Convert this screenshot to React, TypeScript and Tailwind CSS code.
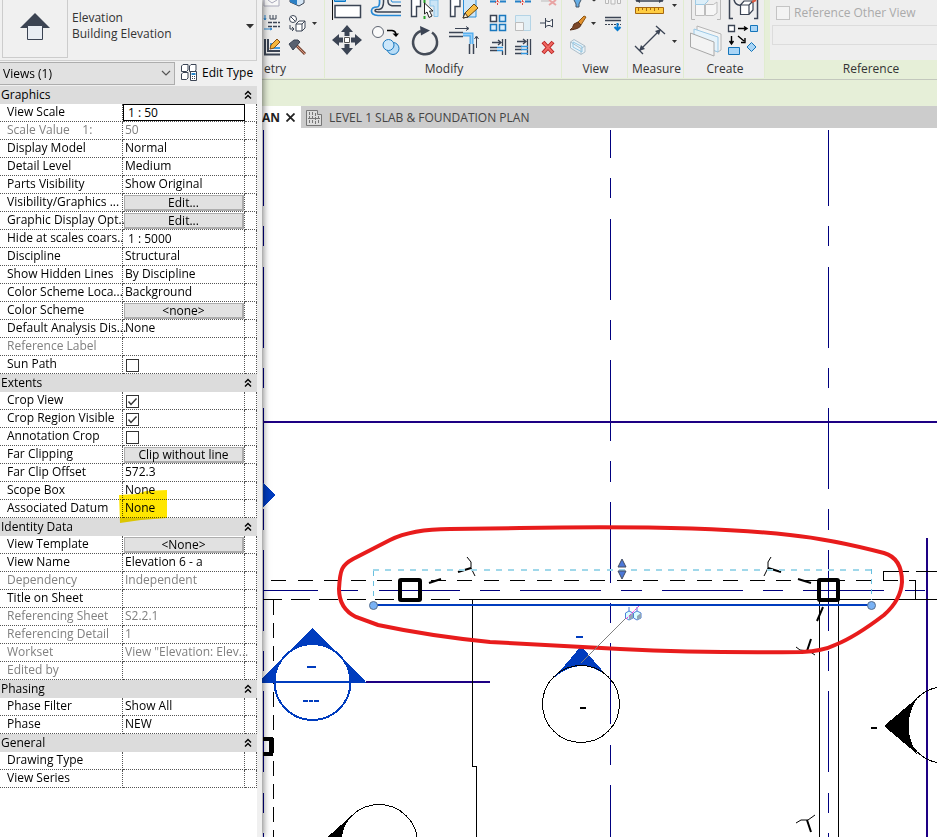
import type { ReactNode } from "react";

type Row = {
  label: string;
  value?: string;
  kind?: "text" | "input" | "button" | "check";
  checked?: boolean;
  muted?: boolean;
  marked?: boolean;
  focused?: boolean;
};

const sections: { title: string; rows: Row[] }[] = [
  {
    title: "Graphics",
    rows: [
      { label: "View Scale", value: "1 : 50", kind: "input", focused: true },
      { label: "Scale Value    1:", value: "50", muted: true },
      { label: "Display Model", value: "Normal" },
      { label: "Detail Level", value: "Medium" },
      { label: "Parts Visibility", value: "Show Original" },
      { label: "Visibility/Graphics ...", value: "Edit...", kind: "button" },
      { label: "Graphic Display Opt...", value: "Edit...", kind: "button" },
      { label: "Hide at scales coars...", value: "1 : 5000", kind: "input" },
      { label: "Discipline", value: "Structural" },
      { label: "Show Hidden Lines", value: "By Discipline" },
      { label: "Color Scheme Loca...", value: "Background" },
      { label: "Color Scheme", value: "<none>", kind: "button" },
      { label: "Default Analysis Dis...", value: "None" },
      { label: "Reference Label", muted: true },
      { label: "Sun Path", kind: "check" },
    ],
  },
  {
    title: "Extents",
    rows: [
      { label: "Crop View", kind: "check", checked: true },
      { label: "Crop Region Visible", kind: "check", checked: true },
      { label: "Annotation Crop", kind: "check" },
      { label: "Far Clipping", value: "Clip without line", kind: "button" },
      { label: "Far Clip Offset", value: "572.3" },
      { label: "Scope Box", value: "None" },
      { label: "Associated Datum", value: "None", marked: true },
    ],
  },
  {
    title: "Identity Data",
    rows: [
      { label: "View Template", value: "<None>", kind: "button" },
      { label: "View Name", value: "Elevation 6 - a" },
      { label: "Dependency", value: "Independent", muted: true },
      { label: "Title on Sheet" },
      { label: "Referencing Sheet", value: "S2.2.1", muted: true },
      { label: "Referencing Detail", value: "1", muted: true },
      { label: "Workset", value: 'View "Elevation: Elev...', muted: true },
      { label: "Edited by", muted: true },
    ],
  },
  {
    title: "Phasing",
    rows: [
      { label: "Phase Filter", value: "Show All" },
      { label: "Phase", value: "NEW" },
    ],
  },
  { title: "General", rows: [{ label: "Drawing Type" }, { label: "View Series" }] },
];

function Value({ row, id }: { row: Row; id: string }) {
  if (row.kind === "button")
    return (
      <button
        id={id}
        className="mx-px mt-px block h-4 w-[120px] border border-r-2 border-b-2 border-[#adadad] bg-[#e1e1e1] text-center leading-[14px]"
      >
        {row.value}
      </button>
    );
  if (row.kind === "check")
    return (
      <span className="relative block h-[17px] pt-[3px] pl-[3px]">
        <input
          id={id}
          type="checkbox"
          defaultChecked={row.checked}
          className="peer block size-[13px] appearance-none border border-[#333] bg-white"
        />
        <svg className="pointer-events-none absolute top-[3px] left-[3px] hidden size-[13px] peer-checked:block" viewBox="0 0 13 13">
          <path d="M2.5 6.5 5 9.5 10.5 3.5" fill="none" stroke="#333" strokeWidth="1.4" />
        </svg>
      </span>
    );
  if (row.kind === "input")
    return (
      <input
        id={id}
        defaultValue={row.value}
        className={
          row.focused
            ? "block h-[17px] w-[122px] border border-black bg-white pb-px pl-1 outline-none"
            : "block h-[17px] w-full bg-white pb-px pl-[5px] outline-none"
        }
      />
    );
  return <span className="block pl-0.5">{row.value}</span>;
}

function Properties() {
  return (
    <table className="w-[257px] table-fixed border-separate border-spacing-0 text-left whitespace-pre">
      <colgroup>
        <col className="w-[123px]" />
        <col className="w-[122px]" />
        <col className="w-3" />
      </colgroup>
      {sections.map((s) => (
        <tbody key={s.title}>
          <tr className="h-[18px] bg-[#dcdcdc]">
            <th colSpan={2} className="p-0 pl-px leading-[18px] font-normal">
              {s.title}
            </th>
            <th className="p-0">
              <button aria-label={`Collapse ${s.title}`} className="-ml-px block">
                <svg width="8" height="10" viewBox="0 0 8 10" className="block">
                  <path d="M1 4.5 4 1.5 7 4.5M1 8.5 4 5.5 7 8.5" fill="none" stroke="#000" strokeWidth="1.4" />
                </svg>
              </button>
            </th>
          </tr>
          {s.rows.map((r) => {
            const id = r.label.replace(/\W+/g, "-").toLowerCase();
            return (
              <tr key={r.label} className={r.muted ? "h-[18px] align-top text-[#808080]" : "h-[18px] align-top"}>
                <th className="border-r border-b border-dotted border-[#555] p-0 pl-[7px] leading-[15px] font-normal">
                  {r.kind ? <label htmlFor={id}>{r.label}</label> : r.label}
                </th>
                <td className="relative border-r border-b border-dotted border-[#555] p-0 leading-[15px]">
                  <Value row={r} id={id} />
                  {r.marked && (
                    <svg className="pointer-events-none absolute -top-2.5 -left-1 mix-blend-multiply" width="49" height="34" viewBox="0 0 49 34">
                      <path d="M0 5 18 4 27 1 48 0V28L22 30 1 33Z" fill="#ffe600" />
                    </svg>
                  )}
                </td>
                <td className="border-r border-b border-dotted border-[#555] p-0" />
              </tr>
            );
          })}
        </tbody>
      ))}
    </table>
  );
}

/** A ribbon command; its drawing uses the ribbon's own coordinate space. */
function Tool({ name, box, children }: { name: string; box: [number, number, number, number]; children?: ReactNode }) {
  return (
    <button aria-label={name} className="block shrink-0">
      <svg width={box[2]} height={box[3]} viewBox={box.join(" ")} fill="none" stroke="#3b4454" className="block">
        {children}
      </svg>
    </button>
  );
}

function Panel({ title, className, children }: { title: string; className?: string; children: ReactNode }) {
  return (
    <section className={`flex h-[78px] shrink-0 flex-col border-r border-[#e0ecd0] bg-[#eeeeee] ${className ?? ""}`}>
      <div className="flex h-[60px] items-start">{children}</div>
      <h2 className="pl-0.5 text-center leading-[18px] text-[#333]">{title}</h2>
    </section>
  );
}

const caret = "h5l-2.5 3Z";

function Ribbon() {
  return (
    <div className="flex h-20 overflow-hidden border-b border-[#c3c8bd] bg-[#e6efd8]">
      <Panel title="etry" className="w-[63px] [&>h2]:pr-11">
        <div className="grid grid-cols-[20px_42px]">
          <Tool name="Cope" box={[262, 0, 20, 12]}>
            <path d="M264 0V6H279V0M268 0 272 3 277 0" fill="#f8f8f8" stroke="#aab" />
          </Tool>
          <Tool name="Join" box={[282, 0, 42, 12]}>
            <path d="M290 0V2L299 6 304 3V0" fill="#d5e6f5" />
            <path d="M290 0V2L297 5V0Z" fill="#2b7fc4" stroke="none" />
          </Tool>
          <Tool name="Wall joins" box={[262, 12, 20, 23]}>
            <path d="M265 15v5m-1-2 1 2 1-2M264 29h8m-2-1 2 1-2 1" stroke="#2d88d0" />
            <path d="M270 15v4h3v-4M273 19h3v-4" />
            <path d="M268 22.5h12M268 26.5h12" strokeWidth="1.5" strokeDasharray="4 1" />
          </Tool>
          <Tool name="Split face" box={[282, 12, 42, 23]}>
            <circle cx="293" cy="19" r="3.5" fill="#fff" />
            <path d="M291 17 295 21M290 25v4h4m-2-2 2 2-2 2" />
            <path d="M296 24 299 21H305V28L302 31H296ZM296 24H302V31M302 24 305 21" fill="#fff" />
            <path d={`M312 22${caret}`} fill="#333" stroke="none" />
          </Tool>
          <Tool name="Edit joins" box={[262, 35, 20, 24]}>
            <path d="M265 39V55M268 39V51H280M264 54.5H280" strokeWidth="2" />
            <path d="M271 43V48H280" stroke="#3f9be0" strokeWidth="2" />
            <path d="M270 49 271 45 277 39 280 42 274 48Z" fill="#f6b63c" stroke="#87521a" />
          </Tool>
          <Tool name="Demolish" box={[282, 35, 42, 24]}>
            <path d="M296 45 305 54" stroke="#7a4b39" strokeWidth="3" />
            <path d="M296 45 305 54" stroke="#df957d" strokeWidth="1" />
            <path d="M289 44 294 40H298L300 42 293 50Z" fill="#596170" />
          </Tool>
        </div>
      </Panel>

      <Panel title="Modify" className="w-[237px]">
        <div className="grid grid-cols-4 pl-[3px]">
          <Tool name="Align" box={[328, 0, 39, 22]}>
            <path d="M332.5 0V20" stroke="#111" />
            <path d="M334.5 0H345.5V1.5H334.5Z" stroke="#0878c8" fill="#c4e4f8" />
            <path d="M335 5.5H360.5V17.5H335Z" fill="#fff" strokeWidth="1.5" />
          </Tool>
          <Tool name="Offset" box={[367, 0, 39, 22]}>
            <path d="M401 15.5H378Q371 15 371.5 10.5 372 7 377 7 380 7 379.5 0" stroke="#2689d6" strokeWidth="1.7" />
            <path d="M401 12H378Q375 12 375 10.5T379 9.5Q384 9 383.5 0M401 5.7H392Q387.5 5 388 0" strokeWidth="1.5" />
            <path d="M401 2H392L391 0" stroke="#2689d6" />
          </Tool>
          <Tool name="Mirror pick" box={[406, 0, 39, 22]}>
            <path d="M411.5 0V16.5H416.5V6.5H420.5V0" fill="#fff" strokeWidth="1.4" />
            <path d="M430 0V6H434V16.5H438V0Z" fill="#cce5f6" stroke="#8cc5e9" />
            <path d="M424.5 0V3M424.5 16V19" stroke="#29a329" strokeWidth="2" />
            <path d="M424.5 3V14L427 12 429 17.5 432 16 429.5 11H433Z" fill="#fff" stroke="#222" />
          </Tool>
          <Tool name="Mirror draw" box={[445, 0, 39, 22]}>
            <path d="M450.5 0V16.5H455V6.5H460V0" fill="#fff" strokeWidth="1.4" />
            <path d="M463.5 0V17H476V0" fill="#cfe7f8" stroke="#2b8fd9" />
            <path d="M463 18 465 13 474 4 478 8 468 17Z" fill="#f7bd44" stroke="#694512" />
            <path d="M463 18 465 13 468 17Z" fill="#ffe9c4" stroke="#333" />
          </Tool>
          <Tool name="Move" box={[328, 22, 39, 36]}>
            <path d="M347 25 353 32H349.5V36H344.5V32H341ZM347 55 353 48H349.5V44H344.5V48H341ZM332 40 339 34V37.5H343V42.5H339V46ZM362 40 355 34V37.5H351V42.5H355V46Z" fill="#3b4454" stroke="none" />
            <path d="M344.5 37.5H349.5V42.5H344.5Z" fill="#fff" stroke="#555" />
          </Tool>
          <Tool name="Copy" box={[367, 22, 39, 36]}>
            <circle cx="378" cy="32" r="5.5" fill="#fafafa" stroke="#5d6470" />
            <path d="M387 30.5H392Q396 31 396 35" stroke="#000" strokeWidth="1.5" />
            <path d="M392.500 33.500H399L396 37Z" fill="#000" stroke="none" />
            <circle cx="393" cy="48.500" r="6" fill="#b7dcf6" stroke="#1978be" />
            <circle cx="388.500" cy="45" r="5.500" fill="#cce7fa" stroke="#1978be" />
          </Tool>
          <Tool name="Rotate" box={[406, 22, 39, 36]}>
            <path d="M432 32.500A12 12 0 1 1 421 31" strokeWidth="2.500" stroke="#444b57" />
            <path d="M420 26 430 30.500 421 35.500Z" fill="#3b4454" stroke="none" />
          </Tool>
          <Tool name="Trim to corner" box={[445, 22, 39, 36]}>
            <path d="M455 28.500H468M466 26.500 469 28.500 466 30.500M476.500 48V37M474.500 39 476.500 36 478.500 39" />
            <path d="M449 32.500H463M449 36.500H463M469.500 44V54M473.500 44V54" strokeWidth="1.500" />
            <path d="M463 34.500H471.500V44" stroke="#4aa9ed" strokeWidth="4" />
            <path d="M463 34.500H471.500V44" stroke="#9cd0f6" strokeWidth="1.500" />
          </Tool>
        </div>
        <div className="grid grid-cols-3 pl-0.5">
          <Tool name="Split" box={[486, 0, 25, 12]}>
            <path d="M490 1.500H496M500 1.500H506" stroke="#2581c7" strokeWidth="2" />
            <path d="M497.500 0V5M495 3 497.500 1 500 3" stroke="#e3473d" strokeDasharray="2 1" />
          </Tool>
          <Tool name="Split with gap" box={[511, 0, 25, 12]}>
            <path d="M515 1.500H521M525 1.500H531" stroke="#2581c7" strokeWidth="2" />
            <path d="M522.500 0V5M520 3 522.500 1 525 3" stroke="#e3473d" strokeDasharray="2 1" />
          </Tool>
          <Tool name="Unpin" box={[536, 0, 25, 12]}>
            <path d="M541 1H549" stroke="#bbb" />
            <path d="M549 0 556 5M556 0 549 5" stroke="#e8a4a4" strokeWidth="2" />
          </Tool>
          <Tool name="Array" box={[486, 12, 25, 23]}>
            <path d="M490.500 15.500H496.500V21.500H490.500Z" fill="#fff" strokeWidth="1.500" />
            <path d="M499.500 15.500H505.500V21.500H499.500ZM490.500 24.500H496.500V30.500H490.500ZM499.500 24.500H505.500V30.500H499.500Z" fill="#d8ecfa" stroke="#1978be" strokeWidth="1.500" />
          </Tool>
          <Tool name="Scale" box={[511, 12, 25, 23]}>
            <path d="M515.500 15.500H530.500V30.500H515.500Z" fill="#e0eef5" stroke="#b4d4e6" />
            <path d="M515.500 22.500H523.500V30.500H515.500Z" fill="#f5f5f5" stroke="#bcbcbc" />
          </Tool>
          <Tool name="Pin" box={[536, 12, 25, 23]}>
            <path d="M540 23H545M545.500 18V28M545.500 20.500 548 21.500H550L552.500 19V27L550 25.500H548L545.500 26.500" fill="#f7f7f7" />
          </Tool>
          <Tool name="Trim single" box={[486, 35, 25, 23]}>
            <path d="M492 42.500H500M498 40 501 42.500 498 45M490 47.500H497M490 50.500H497M502.500 39V46M502.500 51V55M505.500 39V55" strokeWidth="1.300" />
            <path d="M497 47.500H503M497 50.500H503" stroke="#3197e2" strokeWidth="1.500" />
          </Tool>
          <Tool name="Trim multiple" box={[511, 35, 25, 23]}>
            <path d="M517 41.500H525M523 39 526 41.500 523 44M515 46.500H522M515 49.500H522M515 53.500H522M527.500 39V55M530.500 39V55" strokeWidth="1.300" />
            <path d="M521 46.500H528M521 49.500H528M521 53.500H528" stroke="#3197e2" strokeWidth="1.500" />
          </Tool>
          <Tool name="Delete" box={[536, 35, 25, 23]}>
            <path d="M543 42 553 53M553 42 543 53" stroke="#b82020" strokeWidth="4" />
            <path d="M543.500 42.500 552.500 52.500M552.500 42.500 543.500 52.500" stroke="#f16a64" strokeWidth="2" />
          </Tool>
        </div>
      </Panel>

      <Panel title="View" className="w-[66px]">
        <div className="grid grid-cols-[38px_26px]">
          <Tool name="Hide" box={[562, 0, 38, 12]}>
            <path d="M574 0 576 4V7H579V4L581 0" fill="#66aee6" stroke="#456" />
            <path d="M592 0H596L594 1.500Z" fill="#333" stroke="none" />
          </Tool>
          <Tool name="Displace" box={[600, 0, 26, 12]}>
            <path d="M605.500 0V3.500H608.500V0M611 0V4H615V0M617.500 0V3.500H620.500V0" stroke="#b8b8b8" fill="#f4f4f4" />
          </Tool>
          <Tool name="Override" box={[562, 12, 38, 23]}>
            <path d="M578 22 584 16 586 17 581 25Z" fill="#e2902c" stroke="#8b5715" />
            <path d="M570 30Q573 28 574 24L578 22 581 25Q580 29 570 30Z" fill="#7c4727" stroke="#56301a" />
            <path d={`M591 22${caret}`} fill="#333" stroke="none" />
          </Tool>
          <Tool name="Linework" box={[600, 12, 26, 23]}>
            <path d="M605 17.500H621M605 20.500H621" strokeWidth="1.600" />
            <path d="M605 24.500H621" strokeDasharray="2 1" />
            <path d="M617.500 23V30M614.500 27 617.500 30 620.500 27" stroke="#087bd0" strokeWidth="2" />
          </Tool>
          <Tool name="Selection box" box={[562, 35, 38, 23]}>
            <path d="M570.500 42 574 39.500 585 46V52L581 54.500 570.500 48ZM570.500 42 581 48.500V54M581 48.500 585 46" stroke="#aebfca" fill="#e9f3f9" />
            <path d="M573 42V47L582 52V46.500Z" stroke="#92c8e6" />
          </Tool>
        </div>
      </Panel>

      <Panel title="Measure" className="w-14">
        <div className="grid">
          <Tool name="Measure distance" box={[628, 0, 55, 20]}>
            <path d="M636 1H663" strokeWidth="1.500" />
            <path d="M635 0H640V3ZM664 0H659V3Z" fill="#3b4454" stroke="none" />
            <path d="M635.500 7.500H663.500V13.500H635.500Z" fill="#ffcd42" stroke="#a66810" />
            <path d="M638.500 8V11M642.500 8V10M646.500 8V11M650.500 8V10M654.500 8V11M658.500 8V10" stroke="#a66810" />
            <path d={`M672 4${caret}`} fill="#333" stroke="none" />
          </Tool>
          <Tool name="Aligned dimension" box={[628, 20, 55, 38]}>
            <path d="M635 46 643 54M656 26 665 34M640 50 660 30" strokeWidth="1.300" />
            <path d="M639 51 641 45 645 49ZM661 29 655 31 659 35Z" fill="#3b4454" stroke="none" />
            <path d={`M672 40${caret}`} fill="#333" stroke="none" />
          </Tool>
        </div>
      </Panel>

      <Panel title="Create" className="w-[81px]">
        <div className="grid grid-cols-2">
          <Tool name="Create parts" box={[684, 0, 40, 22]}>
            <path d="M695 19.500H691.500V0M717 19.500H720.500V0" stroke="#b8b8b8" />
            <path d="M695.500 4.500H704.500V15.500H695.500ZM705.500 4.500H713.500L717 2V13L713.500 15.500H705.500Z" fill="#f6f6f6" stroke="#bdbdbd" />
            <path d="M695.500 0V4.500H704.500L708 1V0" fill="#dceef8" stroke="#9ecbe5" />
          </Tool>
          <Tool name="Create assembly" box={[724, 0, 40, 22]}>
            <path d="M733 18.500H729.500V0M754 18.500H757.500V0" strokeWidth="1.500" />
            <path d="M734 0Q736 6 741 5" fill="#fff" strokeWidth="1.500" />
            <path d="M740.500 5 744 1H753V10L749 14.500H740.500ZM740.500 5H749V14M749 5 753 1" fill="#fff" strokeWidth="1.200" />
            <path d="M752 2 756 0" stroke="#dc593f" strokeWidth="2" />
          </Tool>
          <Tool name="Create group" box={[684, 22, 40, 36]}>
            <path d="M697 26 721 34V50L718 52 697 43Z" fill="#f4f4f4" stroke="#b6b6b6" />
            <path d="M694 29 718 37V52L694 43Z" fill="#e6f3fb" stroke="#9cc9e6" />
            <path d="M690.500 33 714 42V56L690.500 47Z" fill="#f3f3f3" stroke="#a8a8a8" />
          </Tool>
          <Tool name="Create similar" box={[724, 22, 40, 36]}>
            <path d="M728.500 25.500H734.500V31.500H728.500Z" fill="#fff" strokeWidth="1.300" />
            <path d="M750.500 25.500H757.500V31.500H750.500ZM728.500 47.500H739.500V54.500H728.500ZM751.500 42.500 756 47 751.500 51.500 747 47Z" fill="#a9d5f6" stroke="#1475ba" />
            <path d="M738 28.500H746M744 26.500 747 28.500 744 30.500M731.500 36V43M729.500 41 731.500 44 733.500 41M738 36 744 41M745 38V42.500H741" stroke="#000" strokeWidth="1.400" />
          </Tool>
        </div>
      </Panel>

      <section className="ml-[5px] flex h-[78px] min-w-[167px] flex-1 flex-col overflow-hidden">
        <div className="h-[60px] bg-[#eeeeee] pl-0.5">
          <label className="flex h-[25px] items-center gap-1 pl-1 whitespace-nowrap text-[#aaa]">
            <input type="checkbox" disabled className="size-[14px] appearance-none border border-[#c4c4c4] bg-[#f3f3f3]" />
            Reference Other View
          </label>
          <select disabled aria-label="Referenced view" className="block h-5 w-[220px] appearance-none border border-[#dcdcdc] bg-[#eeeeee]">
            <option value="" />
          </select>
        </div>
        <h2 className="w-[202px] text-center leading-[18px] text-[#333]">Reference</h2>
      </section>
    </div>
  );
}

const GRID = "81 20.200 20.200 20.200";

function Drawing() {
  return (
    <svg role="img" aria-label="Plan view" className="block h-[709px] w-full bg-white" fill="none" shapeRendering="crispEdges">
      <g transform="translate(-262 -128)">
        <g stroke="#00007f">
          <path d="M263.500 130V837M828.500 130V837" strokeDasharray={GRID} strokeDashoffset="5" />
          <path d="M610.500 130V837" strokeDasharray={GRID} strokeDashoffset="53" />
          <path d="M263 590.500H927" strokeDasharray={GRID} strokeDashoffset="26" />
        </g>
        <path d="M263 422H937M366 682H490M927 538V837" stroke="#1d0083" strokeWidth="2" />
        <path d="M263 483 275 495 263 507Z" fill="#003cbe" />

        <g stroke="#000">
          <path d="M271 580.500H915" strokeDasharray="15 11.600" />
          <path d="M263 599.500H472" strokeDasharray="19 9" />
          <path d="M472 599.500H937M472.500 600V766.500H476.500V837M819.500 600V837M838.500 600V837M915.500 580V599" />
          <path d="M273.500 600V837" strokeDasharray="15 8" />
          <path d="M883.500 580V571.500H937" strokeDasharray="34 7" />
          <path d="M263 738.500H271V753.500H263" strokeWidth="4" />
          <g strokeWidth="4" shapeRendering="auto">
            <rect x="400" y="580" width="20" height="20" rx="1" />
            <rect x="819" y="580" width="19" height="20" rx="1" />
          </g>
          <g shapeRendering="auto">
            <path d="M467 557 471 562V568L475 576M771 557 768 562V568L764 576M796 647 800 650 809 651 815 655M796 823 801 820H808L815 815" />
            <path d="M429 583 441 579M458 572 471 568M768 568 781 572M798 579 811 583M823 607 817 621M811 639 807 651M807 820 811 832" strokeWidth="2" />
          </g>
        </g>

        <g>
          <path d="M312.500 628 366.500 682.500H258.500Z" fill="#003cbe" />
          <circle cx="312.500" cy="682" r="38" fill="#fff" stroke="#003cbe" strokeWidth="2" />
          <path d="M275 682H351" stroke="#003cbe" strokeWidth="2" />
          <path d="M307 667H316M303 701H308M309 701H313M314 701H319" stroke="#003cbe" strokeWidth="2" />
        </g>

        <path d="M373.500 596V569M871.500 569V600" stroke="#69c0e0" strokeDasharray="5 5" />
        <path d="M373 569.500H872" stroke="#a0d8ea" strokeWidth="2" strokeDasharray="6 6.300" />
        <path d="M373 605H871" stroke="#003cbe" strokeWidth="2" />
        <g shapeRendering="auto" fill="#79b2f5" stroke="#586f8e">
          <circle cx="373.500" cy="605.500" r="4" />
          <circle cx="871.500" cy="605.500" r="4" />
        </g>
        <path d="M622 559 626 567H618ZM622 579 626 571H618Z" fill="#4c78d8" stroke="#444d60" shapeRendering="auto" />

        <path d="M581 646 555 677Q582 655 608 677Z" fill="#003cbe" />
        <circle cx="581" cy="704" r="38.500" stroke="#000" />
        <path d="M576 637H583" stroke="#003cbe" strokeWidth="2" />
        <path d="M580 708H586M871 727.500H877" stroke="#000" strokeWidth="2" />

        <path d="M917 698 884 726 917 754Q900 726 917 698Z" fill="#000" />
        <circle cx="944" cy="725" r="38" stroke="#000" />
        <path d="M351 816 322 842H342Q341 828 351 816Z" fill="#000" />
        <circle cx="379" cy="843" r="38.500" stroke="#000" />

        <g shapeRendering="auto">
          <path d="M339 589C340 569 342 565 353 559L390 540Q412 529 450 529L520 528C640 526 730 528 790 535Q830 539 884 553C898 557 902 570 902 582Q901 600 884 615C867 628 850 639 835 645Q823 651 802 652C730 653 680 652 620 649L490 642Q430 636 378 625L356 617C344 611 339 602 339 589Z" stroke="#e81c1c" strokeWidth="4" />
          <path d="M581 663 628 616" stroke="#808080" />
          <path d="M625.500 613 629 611 633 613V618L629 620 625.500 618ZM633.500 613 637 611 641 613V618L637 620 633.500 618ZM629 611V607M637 611V607" fill="#d8ffff" stroke="#4d7ed8" />
          <path d="M629 616V620L633 618V613ZM637 616V620L641 618V613Z" fill="#91a7b6" />
          <path d="M626 619 639 606" stroke="#f034d6" strokeDasharray="3 1" />
        </g>
      </g>
    </svg>
  );
}

export default function App() {
  return (
    <div className="flex w-full overflow-hidden bg-white font-['Open_Sans','Noto_Sans',sans-serif] text-[12px] text-black">
      <aside className="relative z-10 w-[262px] shrink-0 border-r-[5px] border-[#f0f0f0] bg-white shadow-[1px_0_7px_rgba(0,0,0,0.55)]">
        <div className="flex h-[61px] border-r border-b border-[#cfcfcf] bg-[#f0f0f0] pl-0.5">
          <div className="flex h-[58px] w-[66px] items-center justify-center border border-t-0 border-[#ccc]">
            <svg width="30" height="28" viewBox="0 0 30 28" className="-mt-1">
              <path d="M15 0 30 15H0Z" fill="#3b4352" />
              <path d="M7.500 12.500H22.500V26.500H7.500Z" fill="#e9edf3" stroke="#3b4352" />
            </svg>
          </div>
          <button className="flex flex-1 items-center justify-between pr-0.5 pl-1 text-left leading-4 text-[#333]">
            <span className="pb-2">
              Elevation
              <br />
              Building Elevation
            </span>
            <svg width="8" height="5" viewBox="0 0 8 5" className="-mt-2">
              <path d="M0 0H8L4 4.500Z" fill="#333" />
            </svg>
          </button>
        </div>
        <div className="flex h-[25px] items-center bg-[#f0f0f0]">
          <div className="relative w-[175px]">
            <select aria-label="Element filter" className="block h-[23px] w-full appearance-none border border-l-0 border-[#adadad] bg-[#e1e1e1] pl-[3px]">
              <option>Views (1)</option>
            </select>
            <svg className="pointer-events-none absolute top-2 right-1" width="10" height="7" viewBox="0 0 10 7">
              <path d="M1 1 5 5 9 1" fill="none" stroke="#555" strokeWidth="1.200" />
            </svg>
          </div>
          <button className="flex flex-1 items-center gap-[5px] pb-0.5 pl-1.5 whitespace-nowrap">
            <svg width="16" height="17" viewBox="0 0 16 17" fill="#fff" stroke="#3b4454">
              <path d="M.5 2 2 .5H7V6L5.500 7.500H.5ZM8.500 2 10 .5H15V6L14 7.500H8.500ZM.5 10 2 8.500H7V14L5.500 15.500H.5Z" />
              <path d="M9.500 7.500H15.500V16.500H9.500Z" />
              <path d="M10.500 9H14.500V11H10.500Z" fill="#2583c8" stroke="none" />
              <path d="M11 12.500H12M13 12.500H14M11 14.500H12M13 14.500H14" />
            </svg>
            Edit Type
          </button>
        </div>
        <Properties />
      </aside>

      <main className="min-w-0 flex-1">
        <Ribbon />
        <div className="h-[26px] bg-[#e6efd8]" />
        <nav aria-label="Open views" className="flex h-[22px] items-center bg-[#cccccc] whitespace-nowrap">
          <div className="flex h-full w-[39px] shrink-0 items-center justify-between bg-white pt-px pr-1.5">
            <button className="font-bold text-[#222]">AN</button>
            <button aria-label="Close view">
              <svg width="9" height="9" viewBox="0 0 9 9" className="block">
                <path d="M.5.5 8.500 8.500M8.500.5.5 8.500" stroke="#222" strokeWidth="1.800" />
              </svg>
            </button>
          </div>
          <button className="flex items-center gap-[7px] pt-px pl-[5px] text-[#444]">
            <svg width="16" height="16" viewBox="0 0 16 16" fill="none" stroke="#777">
              <path d="M.5.5H11.500V4.500H15.500V15.500H.5Z" fill="#ddd" />
              <path d="M3.500 2V14M6.500 2V14M9.500 3V14M12.500 6V14" strokeDasharray="3 1" />
              <path d="M2 8.500H14" />
            </svg>
            LEVEL 1 SLAB &amp; FOUNDATION PLAN
          </button>
        </nav>
        <Drawing />
      </main>
    </div>
  );
}
